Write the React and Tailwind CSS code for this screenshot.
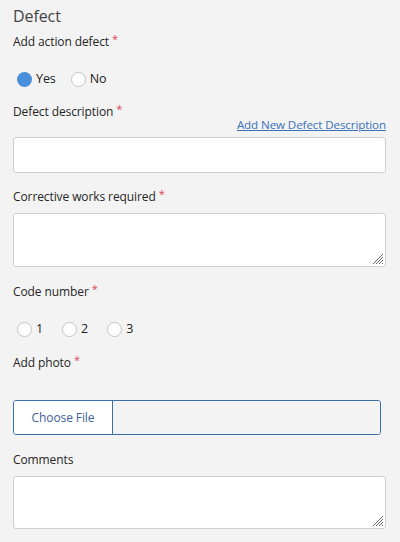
import React, { useState } from 'react';

const Req = () => <span className="ml-[3px] relative -top-[3px] text-[11px] text-[#e0455f]">*</span>;

const Radio = ({ checked, label, onClick, gap }) => (
    <button type="button" onClick={onClick} className={`flex items-center ${gap}`}>
        <span
            className={
                checked
                    ? 'w-[15px] h-[15px] rounded-full bg-[#4a8fdb]'
                    : 'w-[15px] h-[15px] rounded-full bg-white border border-[#c4c4c4]'
            }
        />
        <span className="ml-[4px] text-[12.5px] leading-[20px] text-[#222]">{label}</span>
    </button>
);

const Grip = () => (
    <svg className="absolute right-[2px] bottom-[2px] pointer-events-none" width="12" height="12" viewBox="0 0 12 12">
        <g stroke="#666" strokeWidth="1">
            <line x1="11" y1="1" x2="1" y2="11" />
            <line x1="11" y1="4" x2="4" y2="11" />
            <line x1="11" y1="7" x2="7" y2="11" />
            <line x1="11" y1="10" x2="10" y2="11" />
        </g>
    </svg>
);

const TextBox = ({ h }) => (
    <div className="relative">
        <textarea
            className={`block w-full ${h} resize-none bg-white border border-[#cfcfcf] rounded-[3px] outline-none p-2 text-[13px]`}
        />
        <Grip />
    </div>
);

const App = () => {
    const [defect, setDefect] = useState('yes');
    const [code, setCode] = useState(null);

    return (
        <div
            className="min-h-[542px] bg-[#f3f3f3] pl-[13px] pr-[14px] text-[#262626] tracking-[-0.1px]"
            style={{ fontFamily: '"Open Sans", "Noto Sans", sans-serif' }}
        >
            {/* Title */}
            <div className="text-[16px] leading-[32px] text-[#444]">Defect</div>

            <div className="text-[12px] leading-[20px]">
                Add action defect<Req />
            </div>

            <div className="mt-[17px] h-[20px] flex items-center pl-[4px]">
                <Radio checked={defect === 'yes'} label="Yes" onClick={() => setDefect('yes')} gap="mr-[15px]" />
                <Radio checked={defect === 'no'} label="No" onClick={() => setDefect('no')} />
            </div>

            {/* Defect description */}
            <div className="mt-[13px] h-[33px] flex justify-between">
                <div className="text-[12px] leading-[20px] self-start">
                    Defect description<Req />
                </div>
                <a href="#" className="self-end text-[11.6px] leading-[20px] text-[#3a72b8] underline">
                    Add New Defect Description
                </a>
            </div>
            <input
                type="text"
                className="mt-[2px] block w-full h-[36px] bg-white border border-[#cfcfcf] rounded-[3px] outline-none px-2 text-[13px]"
            />

            <div className="mt-[14px] text-[12px] leading-[20px]">
                Corrective works required<Req />
            </div>
            <div className="mt-[6px]">
                <TextBox h="h-[54px]" />
            </div>

            <div className="mt-[15px] text-[12px] leading-[20px]">
                Code number<Req />
            </div>
            <div className="mt-[17px] h-[20px] flex items-center pl-[4px]">
                {['1', '2', '3'].map((n) => (
                    <Radio key={n} checked={code === n} label={n} onClick={() => setCode(n)} gap="mr-[19px]" />
                ))}
            </div>

            <div className="mt-[14px] text-[12px] leading-[20px]">
                Add photo<Req />
            </div>

            {/* File input */}
            <label className="mt-[27px] flex w-[368px] h-[35px] border border-[#3b6fa8] rounded-[3px] overflow-hidden cursor-pointer">
                <span className="w-[99px] bg-white border-r border-[#3b6fa8] flex items-center justify-center text-[12px] text-[#3c6394]">
                    Choose File
                </span>
                <span className="flex-1 bg-[#f3f3f3]" />
                <input type="file" className="hidden" />
            </label>

            <div className="mt-[15px] text-[12px] leading-[20px]">Comments</div>
            <div className="mt-[6px]">
                <TextBox h="h-[53px]" />
            </div>
        </div>
    );
};

export default App;
